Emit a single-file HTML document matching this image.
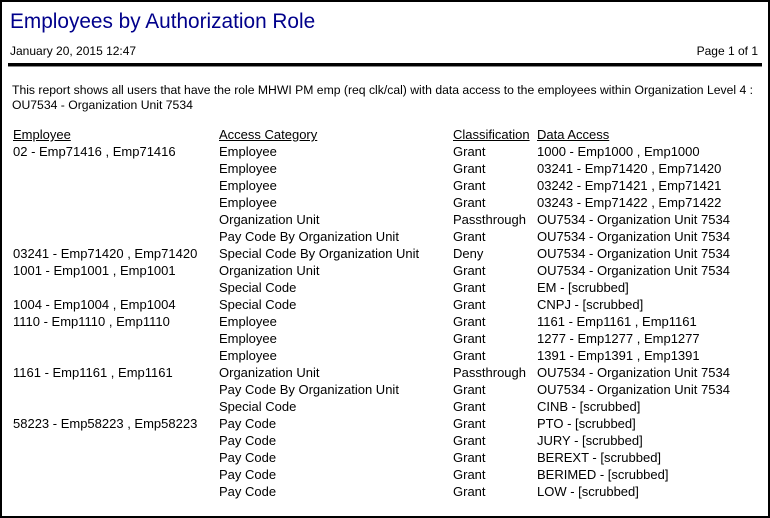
<!DOCTYPE html>
<html><head><style>
html,body{margin:0;padding:0;}
body{width:770px;height:518px;position:relative;background:#fff;font-family:"Liberation Sans",Arial,sans-serif;font-size:12px;color:#000;overflow:hidden}
.frame{position:absolute;left:0;top:0;width:766px;height:514px;border:2px solid #000;}
.t{position:absolute;white-space:nowrap;}
h1{position:absolute;left:10px;top:10px;margin:0;font-weight:normal;font-size:20.8px;color:#00008b;}
.rule{position:absolute;left:8px;top:63px;width:754px;height:3px;background:#000;border-bottom:1px solid #888;}
table{position:absolute;left:13px;top:126px;border-collapse:collapse;font-size:13px}
td{padding:0;height:17px;line-height:17px;vertical-align:top;white-space:nowrap}
.c1{width:206px}.c2{width:234px}.c3{width:84px}
th{font-weight:normal;text-decoration:underline;text-align:left;padding:0;height:17px;line-height:17px}
</style></head><body>
<div class="frame"></div>
<h1>Employees by Authorization Role</h1>
<div class="t" style="left:10px;top:44px">January 20, 2015 12:47</div>
<div class="t" style="right:12px;top:44px">Page 1 of 1</div>
<div class="rule"></div>
<div class="t" style="left:12px;top:83px;line-height:15px;font-size:12.2px">This report shows all users that have the role MHWI PM emp (req clk/cal) with data access to the employees within Organization Level 4 :<br>OU7534 - Organization Unit 7534</div>
<table>
<tr><th class="c1">Employee</th><th class="c2">Access Category</th><th class="c3">Classification</th><th>Data Access</th></tr>
<tr><td>02 - Emp71416 , Emp71416</td><td>Employee</td><td>Grant</td><td>1000 - Emp1000 , Emp1000</td></tr>
<tr><td></td><td>Employee</td><td>Grant</td><td>03241 - Emp71420 , Emp71420</td></tr>
<tr><td></td><td>Employee</td><td>Grant</td><td>03242 - Emp71421 , Emp71421</td></tr>
<tr><td></td><td>Employee</td><td>Grant</td><td>03243 - Emp71422 , Emp71422</td></tr>
<tr><td></td><td>Organization Unit</td><td>Passthrough</td><td>OU7534 - Organization Unit 7534</td></tr>
<tr><td></td><td>Pay Code By Organization Unit</td><td>Grant</td><td>OU7534 - Organization Unit 7534</td></tr>
<tr><td>03241 - Emp71420 , Emp71420</td><td>Special Code By Organization Unit</td><td>Deny</td><td>OU7534 - Organization Unit 7534</td></tr>
<tr><td>1001 - Emp1001 , Emp1001</td><td>Organization Unit</td><td>Grant</td><td>OU7534 - Organization Unit 7534</td></tr>
<tr><td></td><td>Special Code</td><td>Grant</td><td>EM - [scrubbed]</td></tr>
<tr><td>1004 - Emp1004 , Emp1004</td><td>Special Code</td><td>Grant</td><td>CNPJ - [scrubbed]</td></tr>
<tr><td>1110 - Emp1110 , Emp1110</td><td>Employee</td><td>Grant</td><td>1161 - Emp1161 , Emp1161</td></tr>
<tr><td></td><td>Employee</td><td>Grant</td><td>1277 - Emp1277 , Emp1277</td></tr>
<tr><td></td><td>Employee</td><td>Grant</td><td>1391 - Emp1391 , Emp1391</td></tr>
<tr><td>1161 - Emp1161 , Emp1161</td><td>Organization Unit</td><td>Passthrough</td><td>OU7534 - Organization Unit 7534</td></tr>
<tr><td></td><td>Pay Code By Organization Unit</td><td>Grant</td><td>OU7534 - Organization Unit 7534</td></tr>
<tr><td></td><td>Special Code</td><td>Grant</td><td>CINB - [scrubbed]</td></tr>
<tr><td>58223 - Emp58223 , Emp58223</td><td>Pay Code</td><td>Grant</td><td>PTO - [scrubbed]</td></tr>
<tr><td></td><td>Pay Code</td><td>Grant</td><td>JURY - [scrubbed]</td></tr>
<tr><td></td><td>Pay Code</td><td>Grant</td><td>BEREXT - [scrubbed]</td></tr>
<tr><td></td><td>Pay Code</td><td>Grant</td><td>BERIMED - [scrubbed]</td></tr>
<tr><td></td><td>Pay Code</td><td>Grant</td><td>LOW - [scrubbed]</td></tr>
</table>
</body></html>
